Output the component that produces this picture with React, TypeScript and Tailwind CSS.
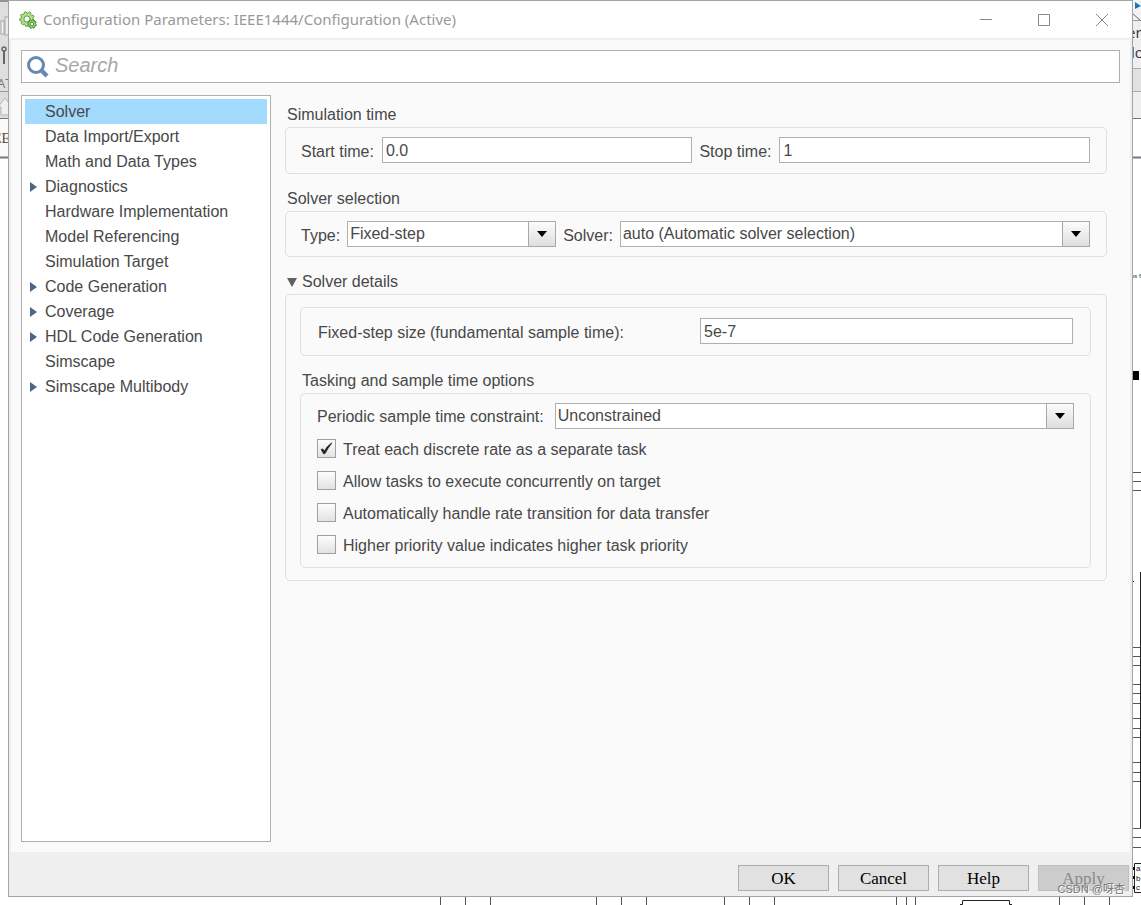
import React, { useState } from 'react';

const navItems = [
  { label: 'Solver', expandable: false },
  { label: 'Data Import/Export', expandable: false },
  { label: 'Math and Data Types', expandable: false },
  { label: 'Diagnostics', expandable: true },
  { label: 'Hardware Implementation', expandable: false },
  { label: 'Model Referencing', expandable: false },
  { label: 'Simulation Target', expandable: false },
  { label: 'Code Generation', expandable: true },
  { label: 'Coverage', expandable: true },
  { label: 'HDL Code Generation', expandable: true },
  { label: 'Simscape', expandable: false },
  { label: 'Simscape Multibody', expandable: true },
];

const taskOptions = [
  { label: 'Treat each discrete rate as a separate task', checked: true },
  { label: 'Allow tasks to execute concurrently on target', checked: false },
  { label: 'Automatically handle rate transition for data transfer', checked: false },
  { label: 'Higher priority value indicates higher task priority', checked: false },
];

// outline of a cog wheel, alternating between the tooth and root radius
const gearPath = (cx: number, cy: number, outer: number, inner: number, teeth: number) => {
  const points: string[] = [];
  const step = (Math.PI * 2) / teeth;
  for (let i = 0; i < teeth; i++) {
    [[0, inner], [0.2, outer], [0.55, outer], [0.75, inner]].forEach(([t, r]) => {
      const a = (i + t) * step;
      points.push(`${(cx + r * Math.cos(a)).toFixed(2)} ${(cy + r * Math.sin(a)).toFixed(2)}`);
    });
  }
  return `M${points.join('L')}Z`;
};

const GearIcon = () => (
  <svg viewBox="0 0 18 18" className="w-[18px] h-[18px] shrink-0" aria-hidden="true">
    <path d={gearPath(8, 8, 7.3, 5.8, 9)} fill="#b4e08c" stroke="#5aa23e" strokeLinejoin="round" />
    <circle cx="8" cy="8" r="3.1" fill="#fff" stroke="#5aa23e" />
    <path d={gearPath(13, 13, 4.4, 3.5, 8)} fill="#93d162" stroke="#37852a" strokeLinejoin="round" />
    <circle cx="13" cy="13" r="1.7" fill="#fff" stroke="#37852a" strokeWidth="0.8" />
  </svg>
);

const LeftEdge = () => (
  <svg className="w-2 h-[905px] shrink-0 block" aria-hidden="true">
    <rect width="8" height="2" fill="#8f969c" />
    <rect y="2" width="8" height="90" fill="#dedede" />
    <rect x="1" y="21" width="3" height="13" fill="#f4f4f4" stroke="#a5a5a5" />
    <rect x="5" y="17" width="4" height="18" fill="#e8ecf2" stroke="#a5a5a5" />
    <circle cx="4" cy="49" r="2" fill="none" stroke="#666" strokeWidth="1.4" />
    <path d="M4 51V64" fill="none" stroke="#666" strokeWidth="2" />
    <text x="-3" y="88" fontSize="13" fontFamily="Open Sans, sans-serif" fill="#777">AT</text>
    <path d="M0 91.5H8" stroke="#9a9a9a" />
    <rect y="92" width="8" height="27" fill="#dcdcdc" />
    <path d="M-2 107L5 98L12 107H9V115H1V107Z" fill="#efefef" stroke="#b4b4b4" />
    <path d="M0 118.5H8" stroke="#777" />
    <rect y="119" width="8" height="38" fill="#fafafa" />
    <text x="-7" y="143" fontSize="14" fontFamily="Liberation Serif, serif" fill="#5b4630">EE</text>
    <path d="M0 157.5H8" stroke="#737985" strokeWidth="2" />
  </svg>
);

const RightEdge = () => (
  <svg className="w-2 h-[905px] shrink-0 block" aria-hidden="true">
    <rect width="8" height="20" fill="#f3f3f3" />
    <path d="M2 2L8 6L2 9Z" fill="#1878be" />
    <path d="M0 14L7 20" stroke="#666" />
    <rect y="20" width="8" height="98" fill="#efefef" />
    <path d="M0 20.5H8" stroke="#999" />
    <text x="-6" y="38" fontSize="15" fontFamily="Open Sans, sans-serif" fill="#333">ero</text>
    <text x="-2" y="58" fontSize="15" fontFamily="Open Sans, sans-serif" fill="#333">lo</text>
    <rect y="69" width="8" height="22" fill="#e2e2e2" />
    <path d="M0 68.5H8M0 91.5H8" stroke="#aaa" />
    <path d="M0 118.5H8" stroke="#777" />
    <path d="M0 157.5H8" stroke="#737985" strokeWidth="2" />
    <text x="-2" y="278" fontSize="6" fontFamily="Liberation Sans, sans-serif" fill="#333">us 6</text>
    <rect y="371" width="6" height="9" fill="#000" />
    <path
      d="M0 472.5H8M0 481.5H8M0 490.5H8M0 647.5H8M0 656.5H8M0 665.5H8M0 684.5H8M0 693.5H8M0 703.5H8M0 718.5H8M0 728.5H8M0 737.5H8M0 762.5H8M0 772.5H8M0 781.5H8M0 828.5H8M0 837.5H8M0 847.5H8"
      stroke="#555"
    />
    <path d="M7.5 572V828M0 581.5H1" stroke="#222" />
    <path d="M8 863.5H1.5V892.5H8" fill="none" stroke="#222" />
    <path d="M0 868.5H2M0 877.5H2M0 887.5H2" stroke="#000" strokeWidth="3" />
    <text x="3" y="871" fontSize="8" fontFamily="Liberation Sans, sans-serif" fill="#111">a</text>
    <text x="3" y="881" fontSize="8" fontFamily="Liberation Sans, sans-serif" fill="#111">b</text>
    <text x="3" y="890" fontSize="8" fontFamily="Liberation Sans, sans-serif" fill="#111">c</text>
  </svg>
);

const BottomEdge = () => (
  <svg className="absolute left-0 bottom-0 w-full h-2" aria-hidden="true">
    <path
      d="M440.5 0V8M465.5 0V8M490.5 0V8M596.5 0V8M621.5 0V8M646.5 0V8M724.5 0V8M749.5 0V8M774.5 0V8M896.5 0V8M906.5 0V8M915.5 0V8M1059.5 0V8M1084.5 0V8M1109.5 0V8"
      stroke="#555"
    />
    <path d="M960 7.5H962.5V3.5H1009.5V7.5H1012" fill="none" stroke="#222" />
  </svg>
);

interface GroupProps {
  className?: string;
  children: React.ReactNode;
}

const Group: React.FC<GroupProps> = ({ className = '', children }) => (
  <div className={`border border-[#e0e0e0] rounded-[5px] ${className}`}>{children}</div>
);

interface TextFieldProps {
  id: string;
  defaultValue: string;
  className?: string;
}

const TextField: React.FC<TextFieldProps> = ({ id, defaultValue, className = '' }) => (
  <input
    id={id}
    type="text"
    defaultValue={defaultValue}
    className={`h-[26px] min-w-0 border border-[#b0b0b0] bg-white px-[3px] pt-[2px] outline-none ${className}`}
  />
);

interface SelectFieldProps {
  id: string;
  options: string[];
  className?: string;
}

const SelectField: React.FC<SelectFieldProps> = ({ id, options, className = '' }) => (
  <div className={`relative h-[26px] min-w-0 ${className}`}>
    <select
      id={id}
      className="w-full h-full appearance-none border border-[#b0b0b0] bg-white pl-[2px] pr-7 pb-px outline-none"
    >
      {options.map((option) => (
        <option key={option}>{option}</option>
      ))}
    </select>
    <span className="pointer-events-none absolute inset-y-0 right-0 w-7 flex items-center justify-center border border-[#a8a8a8] bg-linear-to-b from-[#fcfcfc] to-[#dedede]">
      <svg viewBox="0 0 10 6" className="w-[10px] h-[6px]" aria-hidden="true">
        <path d="M0 0H10L5 6Z" fill="#000" />
      </svg>
    </span>
  </div>
);

const App: React.FC = () => {
  const [active, setActive] = useState('Solver');
  const [showDetails, setShowDetails] = useState(true);

  return (
    <div className="relative min-h-screen flex overflow-hidden bg-white font-['Liberation_Sans',Arial,sans-serif] text-base text-[#484848]">
      <LeftEdge />
      <BottomEdge />

      <main className="relative flex-1 min-w-0 mb-2 flex flex-col border border-[#a4a4a4] bg-[#efefef]">
        <header className="h-[37px] flex items-center bg-white pl-[10px] pr-[17px]">
          <GearIcon />
          <h1 className="ml-[6px] flex-1 font-['Noto_Sans',sans-serif] text-[15px] text-[#999]">
            Configuration Parameters: IEEE1444/Configuration (Active)
          </h1>
          <div className="flex gap-8">
            <button aria-label="Minimize" className="p-[7px]">
              <svg viewBox="0 0 12 12" className="w-3 h-3" aria-hidden="true">
                <path d="M0 5.5H12" stroke="#888" />
              </svg>
            </button>
            <button aria-label="Maximize" className="p-[7px]">
              <svg viewBox="0 0 12 12" className="w-3 h-3" aria-hidden="true">
                <path d="M0.5 0.5H11.5V11.5H0.5Z" fill="none" stroke="#888" />
              </svg>
            </button>
            <button aria-label="Close" className="p-[7px]">
              <svg viewBox="0 0 12 12" className="w-3 h-3" aria-hidden="true">
                <path d="M0 0L12 12M12 0L0 12" stroke="#888" />
              </svg>
            </button>
          </div>
        </header>

        <div className="flex-1 flex flex-col mt-[2px] mx-[2px] bg-[#fafafa] px-[10px] pt-[10px] pb-[10px]">
          <label className="h-[33px] flex items-center border border-[#b0b0b0] bg-white px-[5px]">
            <svg viewBox="0 0 22 22" className="w-[22px] h-[22px] shrink-0" aria-hidden="true">
              <circle cx="9" cy="9" r="7.5" fill="none" stroke="#6589b3" strokeWidth="3" />
              <path d="M14.5 14.5L20 20" stroke="#6589b3" strokeWidth="4.4" />
            </svg>
            <input
              type="text"
              aria-label="Search"
              placeholder="Search"
              className="ml-[6px] flex-1 pb-[3px] bg-transparent text-xl italic outline-none placeholder:text-[#a8a8a8]"
            />
          </label>

          <div className="flex-1 flex mt-3">
            <nav className="w-[250px] shrink-0 border border-[#b0b0b0] bg-white p-[3px]">
              <ul>
                {navItems.map((item) => (
                  <li key={item.label}>
                    <button
                      onClick={() => setActive(item.label)}
                      className={`w-full h-[25px] flex items-center pl-[5px] text-left ${
                        active === item.label ? 'bg-[#a3dbff]' : ''
                      }`}
                    >
                      <span className="w-[15px] shrink-0">
                        {item.expandable && (
                          <svg viewBox="0 0 7 10" className="w-[7px] h-[10px]" aria-hidden="true">
                            <path d="M0 0L7 5L0 10Z" fill="#4c6785" />
                          </svg>
                        )}
                      </span>
                      {item.label}
                    </button>
                  </li>
                ))}
              </ul>
            </nav>

            <section className="flex-1 min-w-0 ml-[14px] mr-[13px] pt-2">
              <h2 className="pl-[2px] leading-6">Simulation time</h2>
              <Group className="h-[47px] flex items-center pl-[15px] pr-4 pb-px">
                <label htmlFor="start-time" className="pt-[3px]">Start time:</label>
                <TextField id="start-time" defaultValue="0.0" className="flex-1 ml-2" />
                <label htmlFor="stop-time" className="ml-[7px] pt-[3px]">Stop time:</label>
                <TextField id="stop-time" defaultValue="1" className="flex-1 ml-2" />
              </Group>

              <h2 className="mt-[13px] pl-[2px] leading-6">Solver selection</h2>
              <Group className="h-[46px] flex items-center pl-[15px] pr-4">
                <label htmlFor="solver-type" className="pt-[3px]">Type:</label>
                <SelectField
                  id="solver-type"
                  options={['Fixed-step', 'Variable-step']}
                  className="w-[209px] ml-[7px]"
                />
                <label htmlFor="solver" className="ml-[7px] pt-[3px]">Solver:</label>
                <SelectField
                  id="solver"
                  options={['auto (Automatic solver selection)', 'discrete (no continuous states)']}
                  className="flex-1 ml-[7px]"
                />
              </Group>

              <h2 className="mt-[13px] pl-[2px] leading-6">
                <button
                  onClick={() => setShowDetails(!showDetails)}
                  aria-expanded={showDetails}
                  className="flex items-center gap-[5px]"
                >
                  <svg viewBox="0 0 10 9" className="w-[10px] h-[9px]" aria-hidden="true">
                    <path d="M0 0H10L5 9Z" fill="#606060" />
                  </svg>
                  Solver details
                </button>
              </h2>
              {showDetails && (
                <Group className="pl-[14px] pr-[15px] py-3">
                  <Group className="h-[49px] flex items-center px-[17px] pb-px">
                    <label htmlFor="step-size" className="flex-1 pt-[3px]">
                      Fixed-step size (fundamental sample time):
                    </label>
                    <TextField id="step-size" defaultValue="5e-7" className="w-[373px]" />
                  </Group>

                  <h3 className="mt-[13px] pl-[2px] leading-6">Tasking and sample time options</h3>
                  <Group className="px-4 pt-[9px] pb-[6px]">
                    <div className="flex items-center">
                      <label htmlFor="constraint" className="pt-[2px]">
                        Periodic sample time constraint:
                      </label>
                      <SelectField
                        id="constraint"
                        options={['Unconstrained', 'Ensure sample time independent', 'Specified']}
                        className="flex-1 ml-[11px]"
                      />
                    </div>
                    <div className="pt-1">
                      {taskOptions.map((option) => (
                        <label key={option.label} className="h-8 flex items-center gap-[7px]">
                          <span className="relative flex pb-[2px]">
                            <input
                              type="checkbox"
                              defaultChecked={option.checked}
                              className="peer w-[19px] h-[19px] appearance-none border border-[#a0a0a0] bg-linear-to-b from-[#fdfdfd] to-[#e2e2e2]"
                            />
                            <svg
                              viewBox="0 0 19 19"
                              className="pointer-events-none absolute left-0 top-0 w-[19px] h-[19px] hidden peer-checked:block"
                              aria-hidden="true"
                            >
                              <path d="M4 10.5L5.8 9.8L7.3 12Q10 7 14.3 4H15Q11 9 8 14.8H6.5Z" fill="#222" stroke="#222" strokeWidth="0.5" />
                            </svg>
                          </span>
                          <span className="pt-[2px]">{option.label}</span>
                        </label>
                      ))}
                    </div>
                  </Group>
                </Group>
              )}
            </section>
          </div>
        </div>

        <footer className="h-11 flex items-center justify-end gap-[9px] pt-2 pr-[3px] font-['Liberation_Serif','Noto_Sans_CJK_SC',serif] text-[17px] text-black">
          <button className="w-[91px] h-[26px] border border-[#adadad] bg-[#e1e1e1]">OK</button>
          <button className="w-[91px] h-[26px] border border-[#adadad] bg-[#e1e1e1]">Cancel</button>
          <button className="w-[91px] h-[26px] border border-[#adadad] bg-[#e1e1e1]">Help</button>
          <button disabled className="w-[91px] h-[26px] border border-[#bfbfbf] bg-[#ccc] text-[#8a8a8a]">
            Apply
          </button>
        </footer>
      </main>

      <RightEdge />

      <span className="absolute right-4 bottom-2 text-[11px] leading-4 text-[#777] font-['Liberation_Sans','Noto_Sans_CJK_SC',sans-serif] [text-shadow:1px_1px_0_#fff]">
        CSDN @呀杏
      </span>
    </div>
  );
};

export default App;
